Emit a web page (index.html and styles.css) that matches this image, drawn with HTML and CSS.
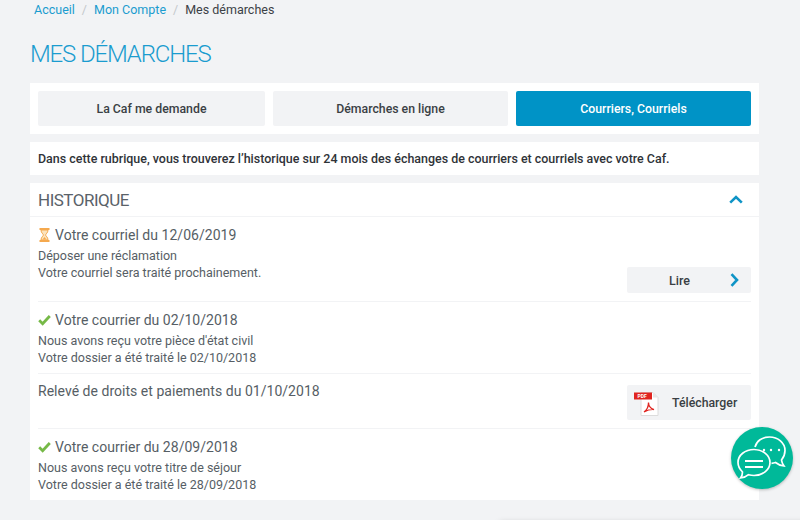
FILE: index.html
```html
<!DOCTYPE html>
<html lang="fr">
<head>
    <meta charset="UTF-8">
    <title>Mes démarches</title>
    <link rel="stylesheet" href="styles.css">
</head>
<body>
    <nav class="crumbs">
        <a href="#">Accueil</a>
        <span class="sep">/</span>
        <a href="#">Mon Compte</a>
        <span class="sep">/</span>
        <span class="current">Mes démarches</span>
    </nav>
    <h1 class="page-title">MES DÉMARCHES</h1>

    <div class="panel tabs">
        <a class="tab tab-1" href="#">La Caf me demande</a>
        <a class="tab tab-2" href="#">Démarches en ligne</a>
        <a class="tab tab-3 active" href="#">Courriers, Courriels</a>
    </div>

    <div class="panel intro">
        Dans cette rubrique, vous trouverez l’historique sur 24 mois des échanges de courriers et courriels avec votre Caf.
    </div>

    <section class="panel history">
        <div class="history-head">
            <h2>HISTORIQUE</h2>
            <svg class="chevron-up" width="14" height="9" viewBox="0 0 14 9"><path d="M1.200 7.600 7 2l5.800 5.600" fill="none" stroke="#0f94c6" stroke-width="2.600"/></svg>
        </div>

        <div class="row row-1">
            <div class="row-text">
                <h3>
                    <svg class="status" width="13" height="14" viewBox="0 0 12 14"><path d="M1 1h10M1 13h10" stroke="#f5a94e" stroke-width="2" fill="none"/><path d="M2.500 2h7c0 3-2.400 3.800-2.400 5s2.400 2 2.400 5h-7c0-3 2.400-3.800 2.400-5S2.500 5 2.500 2z" fill="#fbe3bd" stroke="#f5a94e"/><path d="M4 11.500 6 9l2 2.500z" fill="#f5a94e"/></svg>
                    Votre courriel du 12/06/2019
                </h3>
                <p>Déposer une réclamation</p>
                <p>Votre courriel sera traité prochainement.</p>
            </div>
            <a class="btn btn-read" href="#">
                <span>Lire</span>
                <svg class="chevron-right" width="9" height="14" viewBox="0 0 9 14"><path d="M1.500 1.200 7 7l-5.500 5.800" fill="none" stroke="#0f94c6" stroke-width="2.600"/></svg>
            </a>
        </div>

        <div class="row row-2">
            <div class="row-text">
                <h3>
                    <svg class="status" width="13" height="12" viewBox="0 0 14 12"><path d="M1.300 6.400 5 10l7.700-8.300" fill="none" stroke="#76b947" stroke-width="3"/></svg>
                    Votre courrier du 02/10/2018
                </h3>
                <p>Nous avons reçu votre pièce d'état civil</p>
                <p>Votre dossier a été traité le 02/10/2018</p>
            </div>
        </div>

        <div class="row row-3">
            <div class="row-text">
                <h3>Relevé de droits et paiements du 01/10/2018</h3>
            </div>
            <a class="btn btn-download" href="#">
                <svg class="pdf" width="26" height="26" viewBox="0 0 26 26">
                    <path d="M7 2.500h12l5 5v18H7z" fill="#fff" stroke="#dcdcdc"/>
                    <path d="M19 2.500v5h5z" fill="#e6e6e6"/>
                    <rect x="0" y="2.500" width="18" height="7" fill="#e0241f"/>
                    <text x="3.500" y="8" class="pdf-label">PDF</text>
                    <path d="M10 22c3-2 4.500-6 4.500-9.500 0 3 2 6 5.500 7-3-.2-7 .8-10 2.500z" fill="none" stroke="#e0241f" stroke-width="1.300"/>
                </svg>
                <span>Télécharger</span>
            </a>
        </div>

        <div class="row row-4">
            <div class="row-text">
                <h3>
                    <svg class="status" width="13" height="12" viewBox="0 0 14 12"><path d="M1.300 6.400 5 10l7.700-8.300" fill="none" stroke="#76b947" stroke-width="3"/></svg>
                    Votre courrier du 28/09/2018
                </h3>
                <p>Nous avons reçu votre titre de séjour</p>
                <p>Votre dossier a été traité le 28/09/2018</p>
            </div>
        </div>
    </section>

    <a class="chat" href="#">
        <svg width="62" height="62" viewBox="0 0 62 62" fill="none" stroke="#fff" stroke-width="1.700">
            <path d="M24 20c1.500-6 7-10 14.500-10C47 10 54 16 54 23.500c0 4-1.500 7-3.500 9.500.2 2 1.500 4.500 2.500 6-3-.3-6-1.500-8.500-3.500-1.500.5-2.500.7-4 .8"/>
            <circle cx="33" cy="23" r="1.200" fill="#fff" stroke="none"/>
            <circle cx="40" cy="23" r="1.200" fill="#fff" stroke="none"/>
            <circle cx="48" cy="23" r="1.200" fill="#fff" stroke="none"/>
            <path d="M23 22.500c-9 0-16 5.700-16 13 0 4 2 7 4.500 9.500 0 2-.8 4.500-2 6 3-.2 6-1.500 8-3.300 1.800.5 3.500.8 5.500.8 9 0 16-6 16-13s-7-13-16-13z"/>
            <path d="M14 34h18M14 40h18" stroke-width="1.800"/>
        </svg>
    </a>
    <div class="bottom-shadow"></div>
</body>
</html>
```

FILE: styles.css
```css
* {
    box-sizing: border-box;
}

html, body {
    height: 520px;
    overflow: hidden;
}

body {
    margin: 0;
    padding: 0 41px 0 30px;
    background-color: #f2f3f5;
    font-family: Roboto, sans-serif;
    color: #32373c;
}

a {
    text-decoration: none;
}

.crumbs {
    display: flex;
    gap: 7px;
    height: 20px;
    padding-left: 4px;
    font-size: 12.500px;
    line-height: 20px;
}

.crumbs a {
    color: #1a9ccf;
}

.crumbs .sep {
    color: #c4c8cc;
}

.crumbs .current {
    color: #3c4146;
}

.page-title {
    margin: 20px 0 15px;
    font-size: 24px;
    font-weight: 300;
    line-height: 28px;
    letter-spacing: -1.150px;
    color: #1a9ccf;
}

.panel {
    background: #fff;
}

.tabs {
    display: flex;
    gap: 8px;
    height: 51px;
    padding: 8px;
    margin-bottom: 8px;
}

.tab {
    display: flex;
    align-items: center;
    justify-content: center;
    height: 35px;
    padding-top: 1px;
    border-radius: 2px;
    background: #f2f3f5;
    color: #3a3f44;
    font-size: 12.300px;
    font-weight: 500;
}

.tab-1 {
    width: 227px;
}

.tab-2 {
    width: 235px;
}

.tab-3 {
    width: 235px;
}

.tab.active {
    background: #0093c6;
    color: #fff;
}

.intro {
    height: 33px;
    margin-bottom: 8px;
    padding-left: 8px;
    font-size: 12.450px;
    font-weight: 500;
    line-height: 33px;
    color: #2f3338;
}

.history-head {
    display: flex;
    align-items: center;
    justify-content: space-between;
    height: 34px;
    padding: 0 16px 0 8px;
    border-bottom: 1px solid #f2f3f5;
}

.history-head h2 {
    margin: 0;
    font-size: 17px;
    font-weight: 400;
    letter-spacing: -0.500px;
    color: #5a6269;
}

.row {
    display: flex;
    justify-content: space-between;
    margin: 0 8px;
    border-bottom: 1px solid #f2f3f5;
}

.row-1 {
    height: 85px;
    padding-top: 9px;
}

.row-2 {
    height: 72px;
    padding-top: 9px;
}

.row-3 {
    height: 55px;
    padding-top: 8px;
}

.row-4 {
    height: 71px;
    padding-top: 9px;
    border-bottom: 0;
}

.row h3 {
    display: flex;
    align-items: center;
    gap: 4px;
    margin: 0 0 3px;
    font-size: 14px;
    font-weight: 400;
    line-height: 18px;
    letter-spacing: 0.030px;
    color: #565e65;
}

.row p {
    margin: 0;
    font-size: 12.500px;
    line-height: 17px;
    color: #565e65;
}

.btn {
    display: flex;
    align-items: center;
    border-radius: 2px;
    background: #f2f3f5;
    color: #3a3f44;
    font-weight: 500;
}

.btn-read {
    justify-content: space-between;
    width: 124px;
    height: 26px;
    margin-top: 41px;
    padding: 0 12px 0 42px;
    font-size: 12.500px;
}

.btn-download {
    gap: 12px;
    width: 124px;
    height: 35px;
    margin-top: 3px;
    padding-left: 7px;
    font-size: 12.300px;
}

.pdf-label {
    font-family: Roboto, sans-serif;
    font-size: 5px;
    font-weight: 700;
    fill: #fff;
}

.chat {
    position: absolute;
    left: 731px;
    top: 427px;
    width: 62px;
    height: 62px;
    border-radius: 50%;
    background: #00b999;
    box-shadow: 0 1px 3px rgba(0, 0, 0, 0.25);
}

.chat svg {
    display: block;
}

.bottom-shadow {
    position: absolute;
    left: 500px;
    top: 523px;
    width: 320px;
    height: 10px;
    background: #fff;
    box-shadow: 0 0 6px rgba(0, 0, 0, 0.25);
}
```
